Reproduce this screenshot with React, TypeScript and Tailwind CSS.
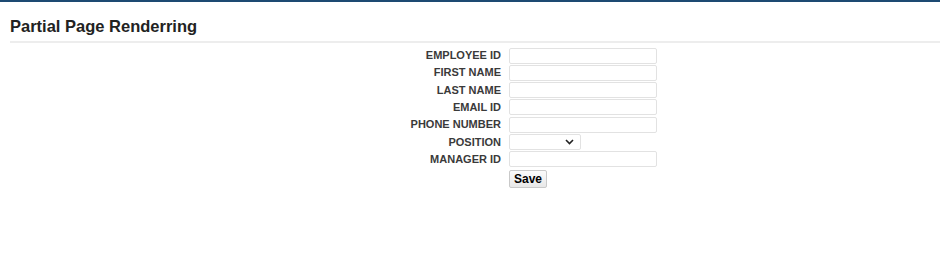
import React from 'react'

const fields = ['EMPLOYEE ID', 'FIRST NAME', 'LAST NAME', 'EMAIL ID', 'PHONE NUMBER', 'POSITION', 'MANAGER ID']

const Row: React.FC<{ label: string }> = ({ label }) => (
  <>
    <div className="text-right text-[11px] font-bold leading-[17px] text-[#3a3a3a]">{label}</div>
    <div className="flex items-center">
      {label === 'POSITION' ? (
        <div className="flex h-[16px] w-[72px] items-center justify-end rounded-[2px] border border-[#e2e2e2] bg-white pr-[6px]">
          <svg width="9" height="6" viewBox="0 0 9 6" fill="none">
            <path d="M1 1l3.5 3.5L8 1" stroke="#222" strokeWidth="1.6" />
          </svg>
        </div>
      ) : (
        <input className="h-[16px] w-[148px] rounded-[2px] border border-[#e2e2e2] bg-white outline-none" />
      )}
    </div>
  </>
)

const App: React.FC = () => {
  return (
    <div className="h-[269px] w-[940px] bg-white font-['Liberation_Sans',Arial,sans-serif]">
      <div className="h-[2px] bg-[#1d4a72]"></div>
      <div className="pl-[10px]">
        <h1 className="pt-[14px] text-[16.5px] font-bold leading-[20px] text-[#222]">Partial Page Renderring</h1>
        <div className="mt-[5px] h-[2px] bg-[#ededed]"></div>
      </div>
      <div className="mt-[4px] grid grid-cols-[501px_148px] gap-x-[8px] gap-y-[0.33px]">
        {fields.map((f) => (
          <Row key={f} label={f} />
        ))}
        <div></div>
        <div className="-mt-[2px]">
          <button className="h-[18px] rounded-[2px] border border-[#c9c9c9] bg-gradient-to-b from-[#fbfbfb] to-[#e8e8e8] px-[4px] text-[12px] font-bold leading-[16px] text-black">
            Save
          </button>
        </div>
      </div>
    </div>
  )
}

export default App
